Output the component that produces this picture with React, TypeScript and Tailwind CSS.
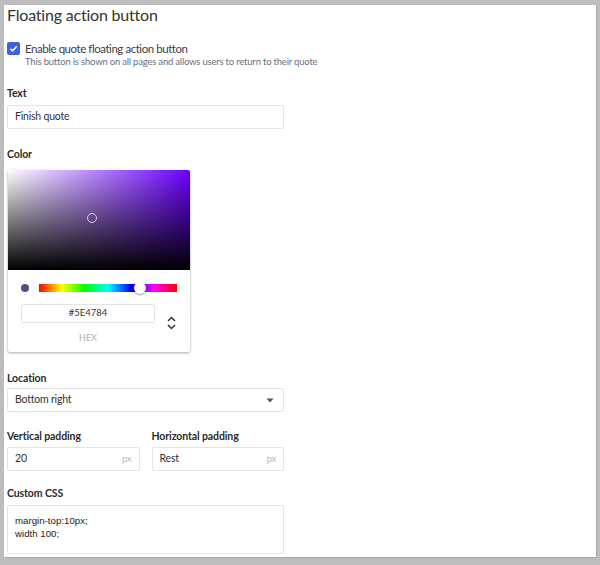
import React from "react";

const font = { fontFamily: "Lato, 'Noto Sans', sans-serif" };

function Label({ children }: { children: React.ReactNode }) {
  return (
    <div className="text-[10.5px] font-bold text-[#2b2b2b] leading-[12px] tracking-[-0.1px]">
      {children}
    </div>
  );
}

function PxInput({ value }: { value: string }) {
  return (
    <div className="flex items-center h-[24px] border border-[#e3e3e8] rounded-[2px] bg-white px-[7px] text-[10.5px] tracking-[-0.2px] text-[#333]">
      <span className="flex-1">{value}</span>
      <span className="text-[9.5px] text-[#b8b8b8]">px</span>
    </div>
  );
}

function ColorPicker() {
  return (
    <div className="w-[182px] bg-white shadow-[0_1px_3px_rgba(0,0,0,0.35)] rounded-[2px]">
      {/* saturation / value area */}
      <div className="relative h-[100px] rounded-t-[2px] bg-[linear-gradient(to_top,#000,transparent),linear-gradient(to_right,#fff,#6a00ff)]">
        <div className="absolute left-[79px] top-[43px] w-[10px] h-[10px] rounded-full border-[1.5px] border-[#d8d0e8]" />
      </div>
      <div className="px-[13px] pt-[14px] pb-[9px]">
        <div className="flex items-center gap-[10px]">
          <div className="w-[8px] h-[8px] rounded-full bg-[#5E4784]" />
          <div className="relative flex-1 h-[8px] bg-[linear-gradient(to_right,#f00,#ff0,#0f0,#0ff,#00f,#f0f,#f00)]">
            <div className="absolute left-[95px] top-[-2px] w-[12px] h-[12px] rounded-full bg-white shadow-[0_1px_2px_rgba(0,0,0,0.4)]" />
          </div>
        </div>
        <div className="flex items-start mt-[12px]">
          <div className="w-[134px] flex flex-col items-center">
            <div className="w-full h-[19px] border border-[#e3e3e3] rounded-[2px] flex items-center justify-center text-[9.5px] text-[#333]">
              #5E4784
            </div>
            <div className="mt-[9px] text-[9px] leading-[11px] text-[#b0b0b0]">HEX</div>
          </div>
          <div className="ml-[12px] mt-[12px] flex flex-col items-center">
            <svg width="9" height="6" viewBox="0 0 9 6" fill="none" stroke="#333" strokeWidth="1.5">
              <path d="M1 5 L4.5 1.5 L8 5" />
            </svg>
            <svg width="9" height="6" viewBox="0 0 9 6" fill="none" stroke="#333" strokeWidth="1.5" className="mt-[2px]">
              <path d="M1 1 L4.5 4.5 L8 1" />
            </svg>
          </div>
        </div>
      </div>
    </div>
  );
}

export default function App() {
  return (
    <div className="w-[600px] h-[565px] bg-[#bdbdbd] pt-[5px] pl-[4px] pr-[4px] pb-[8px]" style={font}>
      <div className="h-full bg-white pl-[3px] shadow-[1px_1px_0_#a9a9a9]">
        <h1 className="text-[16px] leading-[18px] tracking-[-0.2px] text-[#333] pt-[1px]">Floating action button</h1>

        {/* Enable checkbox */}
        <div className="flex mt-[18px]">
          <div className="w-[13px] h-[13px] rounded-[2px] bg-[#3f63e0] flex items-center justify-center">
            <svg width="9" height="9" viewBox="0 0 10 10" fill="none" stroke="#fff" strokeWidth="1.6">
              <path d="M1.5 5.2 L4 7.6 L8.6 2.4" />
            </svg>
          </div>
          <div className="ml-[5px]">
            <div className="text-[11.5px] leading-[14px] tracking-[-0.45px] text-[#3d3d45]">Enable quote floating action button</div>
            <div className="text-[9.5px] leading-[12px] tracking-[-0.2px] text-[#6b6f80]">
              This button is shown on all pages and allows users to return to their quote
            </div>
          </div>
        </div>

        <div className="w-[277px]">
          <div className="mt-[19px]">
            <Label>Text</Label>
            <div className="mt-[6px] h-[24px] border border-[#e3e3e8] rounded-[2px] flex items-center px-[7px] text-[10.5px] tracking-[-0.2px] text-[#333]">
              Finish quote
            </div>
          </div>

          <div className="mt-[19px]">
            <Label>Color</Label>
            <div className="mt-[10px] ml-[1px]">
              <ColorPicker />
            </div>
          </div>

          <div className="mt-[20px]">
            <Label>Location</Label>
            <div className="mt-[4px] h-[24px] border border-[#e3e3e8] rounded-[2px] flex items-center px-[7px] text-[10.5px] tracking-[-0.2px] text-[#333]">
              <span className="flex-1">Bottom right</span>
              <svg width="8" height="5" viewBox="0 0 8 5" className="mr-[2px]">
                <path d="M0.5 0.5 L7.5 0.5 L4 4.5 Z" fill="#555" />
              </svg>
            </div>
          </div>

          <div className="mt-[18px] grid grid-cols-2 gap-[12px]">
            <div>
              <Label>Vertical padding</Label>
              <div className="mt-[5px]">
                <PxInput value="20" />
              </div>
            </div>
            <div>
              <Label>Horizontal padding</Label>
              <div className="mt-[5px]">
                <PxInput value="Rest" />
              </div>
            </div>
          </div>

          <div className="mt-[16px]">
            <Label>Custom CSS</Label>
            <div
              className="mt-[6px] h-[49px] border border-[#e3e3e8] rounded-[2px] px-[7px] pt-[8px] text-[9.7px] leading-[13px] text-[#222]"
              style={{ fontFamily: "'Liberation Sans', Arial, sans-serif" }}
            >
              <div>margin-top:10px;</div>
              <div>width 100;</div>
            </div>
          </div>
        </div>
      </div>
    </div>
  );
}
